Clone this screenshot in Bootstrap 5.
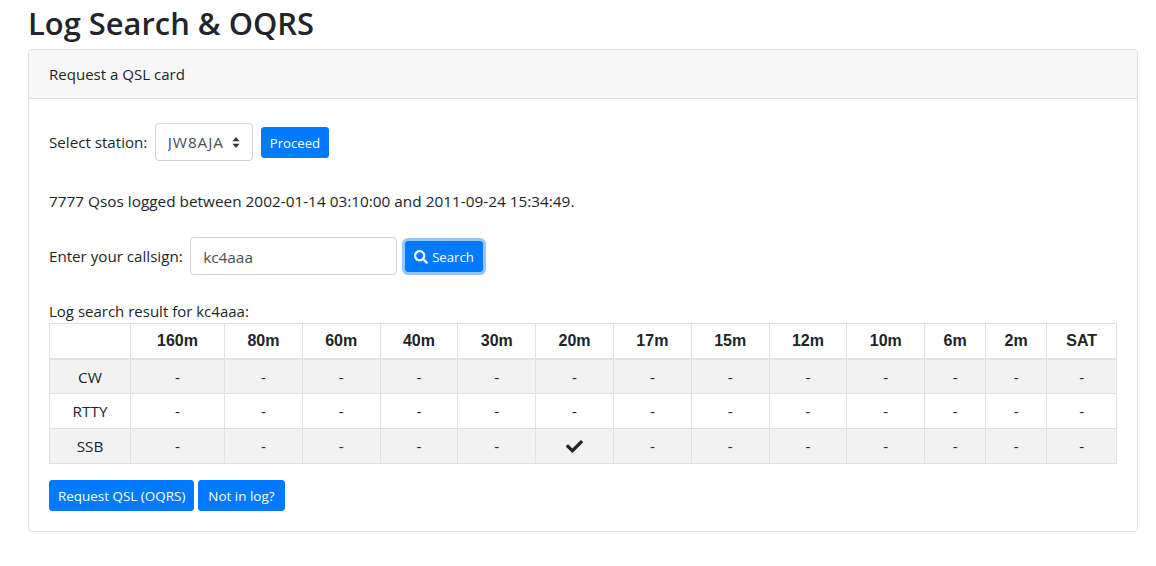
<!DOCTYPE html>
<html lang="en"><head><meta charset="utf-8"><title>Log Search &amp; OQRS</title>
<link rel="stylesheet" href="https://cdn.jsdelivr.net/npm/bootstrap@5.3.0/dist/css/bootstrap.min.css">
<style>
body{font-family:"Open Sans","Noto Sans",sans-serif;font-size:15.35px;color:#212529;overflow:hidden}
.page-wrap{padding:0 18px 0 28px}
.page-title{font-size:30.9px;font-weight:600;line-height:36px;margin:5px 0 8px 0}
.qsl-card{border-color:#dfdfdf;border-radius:4px}
.qsl-card .card-header{padding:12px 20px;height:49px;background:#f7f7f7;line-height:24px;border-color:#dfdfdf;font-size:15.05px}
.qsl-card .card-body{padding:24px 20px 20px}
.field-row{height:38px}
.field-row label{margin-right:7.5px;font-size:15.15px;padding-top:1px}
.ctl{height:38px;border:1px solid #ced4da;border-radius:4px;color:#495057;font-size:15.35px;padding-top:1px}
.station{width:98px;padding:1px 28px 0 12px;margin-right:8px;letter-spacing:.9px;appearance:none;background:#fff url("data:image/svg+xml,%3Csvg xmlns='http://www.w3.org/2000/svg' viewBox='0 0 8 12'%3E%3Cpath fill='%23343a40' d='M4 0 0 4.6h8zM4 12 0 7.4h8z'/%3E%3C/svg%3E") no-repeat right 12px center/8px 11px}
.call{width:207px;padding:1px 12px 0;margin-right:8px;background:#fff}
.blue{background:#007bff;border-color:#007bff;color:#fff;border-radius:3px;font-size:13.45px;height:31px;padding:1px 8px 0;line-height:29px}
.go{font-size:13.15px}
.wide{padding:1px 9px 0}
.ring{box-shadow:0 0 0 3px rgba(38,143,255,.5)}
.stat{margin:28px 0 24px;line-height:24px}
.caption{margin:24px 0 0;line-height:24px;font-size:15px}
.res{table-layout:fixed;width:1068px;margin:0 0 16px;--bs-table-striped-bg:#f2f2f2}
.res,.res thead,.res tbody,.res tr,.res th,.res td{border-color:#dee2e6}
.res th{font-family:"Liberation Sans",sans-serif;font-size:16px;font-weight:700;height:35px;padding:1px 0 0;vertical-align:middle;border-bottom-width:2px}
.res td{height:35px;padding:2px 0 0;vertical-align:middle;color:#212529;font-size:15.35px}
.res>thead{border-top:1px solid #dee2e6}
.res>tbody{border-top:0}
.w81{width:81px}.w94{width:94px}.w78{width:77.8px}.w61{width:61px}.w70{width:70px}
.chk{width:17px;height:17px;fill:#212529;vertical-align:-3px}
.mag{width:14px;height:14px;fill:#fff;vertical-align:-2px;margin-right:4px}
</style></head><body>
<div class="page-wrap">
<h1 class="page-title">Log Search &amp; OQRS</h1>
<div class="card qsl-card">
<div class="card-header">Request a QSL card</div>
<div class="card-body">
<form class="d-flex align-items-center field-row"><label for="st">Select station:</label>
<select id="st" class="ctl station"><option>JW8AJA</option></select>
<button type="button" class="btn blue go">Proceed</button></form>
<p class="stat">7777 Qsos logged between 2002-01-14 03:10:00 and 2011-09-24 15:34:49.</p>
<form class="d-flex align-items-center field-row"><label for="cs">Enter your callsign:</label>
<input id="cs" class="ctl call" value="kc4aaa">
<button type="button" class="btn blue go ring"><svg class="mag" viewBox="0 0 512 512"><path d="M505 442.7L405.3 343c-4.5-4.5-10.6-7-17-7H372c27.6-35.3 44-79.7 44-128C416 93.1 322.9 0 208 0S0 93.1 0 208s93.1 208 208 208c48.3 0 92.7-16.4 128-44v16.3c0 6.4 2.5 12.5 7 17l99.7 99.7c9.4 9.4 24.6 9.4 33.9 0l28.3-28.3c9.4-9.4 9.4-24.6.1-34zM208 336c-70.7 0-128-57.2-128-128 0-70.7 57.2-128 128-128 70.7 0 128 57.2 128 128 0 70.7-57.2 128-128 128z"/></svg>Search</button></form>
<p class="caption">Log search result for kc4aaa:</p>
<table class="table table-bordered table-striped text-center res">
<colgroup><col class="w81"><col class="w94"><col class="w78"><col class="w78"><col class="w78"><col class="w78"><col class="w78"><col class="w78"><col class="w78"><col class="w78"><col class="w78"><col class="w61"><col class="w61"><col class="w70"></colgroup>
<thead><tr><th></th><th>160m</th><th>80m</th><th>60m</th><th>40m</th><th>30m</th><th>20m</th><th>17m</th><th>15m</th><th>12m</th><th>10m</th><th>6m</th><th>2m</th><th>SAT</th></tr></thead>
<tbody>
<tr><td>CW</td><td>-</td><td>-</td><td>-</td><td>-</td><td>-</td><td>-</td><td>-</td><td>-</td><td>-</td><td>-</td><td>-</td><td>-</td><td>-</td></tr>
<tr><td>RTTY</td><td>-</td><td>-</td><td>-</td><td>-</td><td>-</td><td>-</td><td>-</td><td>-</td><td>-</td><td>-</td><td>-</td><td>-</td><td>-</td></tr>
<tr><td>SSB</td><td>-</td><td>-</td><td>-</td><td>-</td><td>-</td><td><svg class="chk" viewBox="0 0 512 512"><path d="M173.898 439.404l-166.4-166.4c-9.997-9.997-9.997-26.206 0-36.204l36.203-36.204c9.997-9.998 26.207-9.998 36.204 0L192 312.69 432.095 72.596c9.997-9.997 26.207-9.997 36.204 0l36.203 36.204c9.997 9.997 9.997 26.206 0 36.204l-294.4 294.401c-9.998 9.997-26.207 9.997-36.204-.001z"/></svg></td><td>-</td><td>-</td><td>-</td><td>-</td><td>-</td><td>-</td><td>-</td></tr>
</tbody></table>
<div class="d-flex gap-1"><button type="button" class="btn blue">Request QSL (OQRS)</button><button type="button" class="btn blue wide">Not in log?</button></div>
</div></div></div>
<script src="https://cdn.jsdelivr.net/npm/bootstrap@5.3.0/dist/js/bootstrap.bundle.min.js"></script>
</body></html>
